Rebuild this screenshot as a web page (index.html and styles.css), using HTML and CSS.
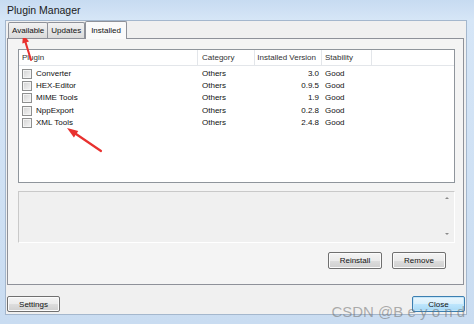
FILE: index.html
```html
<!DOCTYPE html>
<html lang="en">
<head>
  <meta charset="UTF-8" />
  <title>Plugin Manager</title>
  <link rel="stylesheet" href="styles.css">
</head>
<body>

  <div class="janela">
    <div class="titulo">Plugin Manager</div>

    <div class="cliente">
      <div class="abas">
        <div class="aba">Available</div>
        <div class="aba">Updates</div>
        <div class="aba ativa">Installed</div>
      </div>

      <div class="painel">
        <div class="lista">
          <div class="linha cabecalho">
            <div class="col-nome">Plugin</div>
            <div class="col-cat">Category</div>
            <div class="col-ver">Installed Version</div>
            <div class="col-est">Stability</div>
            <div class="col-resto"></div>
          </div>
          <div class="linha"><div class="col-nome"><span class="check"></span>Converter</div><div class="col-cat">Others</div><div class="col-ver">3.0</div><div class="col-est">Good</div></div>
          <div class="linha"><div class="col-nome"><span class="check"></span>HEX-Editor</div><div class="col-cat">Others</div><div class="col-ver">0.9.5</div><div class="col-est">Good</div></div>
          <div class="linha"><div class="col-nome"><span class="check"></span>MIME Tools</div><div class="col-cat">Others</div><div class="col-ver">1.9</div><div class="col-est">Good</div></div>
          <div class="linha"><div class="col-nome"><span class="check"></span>NppExport</div><div class="col-cat">Others</div><div class="col-ver">0.2.8</div><div class="col-est">Good</div></div>
          <div class="linha"><div class="col-nome"><span class="check"></span>XML Tools</div><div class="col-cat">Others</div><div class="col-ver">2.4.8</div><div class="col-est">Good</div></div>
        </div>

        <div class="descricao">
          <div class="rolagem">
            <span class="seta-cima"></span>
            <span class="seta-baixo"></span>
          </div>
        </div>

        <div class="acoes">
          <button class="botao">Reinstall</button>
          <button class="botao">Remove</button>
        </div>
      </div>

      <div class="rodape">
        <button class="botao">Settings</button>
        <button class="botao padrao">Close</button>
      </div>
    </div>

    <!-- anotacoes em vermelho por cima da janela -->
    <svg class="marcas" width="474" height="324" viewBox="0 0 474 324">
      <line x1="31" y1="60" x2="25.6" y2="42.6" stroke="#e8312f" stroke-width="2" stroke-linecap="round" />
      <polygon points="23,34 29,41.6 22.3,43.6" fill="#e8312f" />
      <line x1="101" y1="151" x2="76" y2="134" stroke="#e8312f" stroke-width="2.2" stroke-linecap="round" />
      <polygon points="67,128 78.3,130.9 73.9,137.5" fill="#e8312f" />
    </svg>

    <div class="marca-dagua">CSDN @B e y o n d</div>
  </div>

</body>
</html>
```

FILE: styles.css
```css
    body {
      margin: 0;
      font-family: "Liberation Sans", Arial, sans-serif;
      font-size: 8px;
      color: #111;
    }

    .janela {
      position: relative;
      width: 474px;
      height: 324px;
      box-sizing: border-box;
      padding: 20px 7px 9px 5px;
      background: linear-gradient(#c7dbf1, #d6e6f7 20px, #c9dcf1);
    }

    .titulo {
      position: absolute;
      top: 4px;
      left: 7px;
      font-size: 10.5px;
      color: #1a1a1a;
    }

    .cliente {
      height: 100%;
      box-sizing: border-box;
      border: 1px solid #a4b7cd;
      background-color: #f0f0f0;
      display: flex;
      flex-direction: column;
    }

    .abas {
      display: flex;
      align-items: flex-end;
      height: 18px;
      padding-left: 2px;
      position: relative;
      z-index: 1;
    }

    .aba {
      height: 15px;
      line-height: 15px;
      padding: 0 3px;
      margin-bottom: 1px;
      margin-right: -1px;
      border: 1px solid #8e9199;
      border-bottom: none;
      border-radius: 2px 2px 0 0;
      background: linear-gradient(#f2f2f2, #e6e6e6 50%, #dadada);
    }

    .aba.ativa {
      height: 17px;
      line-height: 17px;
      margin-bottom: 0;
      margin-left: 1px;
      padding: 0 5px;
      background: #fafafa;
    }

    .painel {
      margin: -1px 2px 0 1px;
      height: 247px;
      box-sizing: border-box;
      border: 1px solid #8e9199;
      background-color: #f4f4f4;
      padding: 10px 8px 0 10px;
    }

    .lista {
      height: 134px;
      box-sizing: border-box;
      border: 1px solid #8f959c;
      background-color: #fff;
    }

    .linha {
      display: grid;
      grid-template-columns: 179px 57px 67px 50px 1fr;
      height: 12.2px;
      line-height: 12px;
    }

    .linha:nth-child(2) {
      margin-top: 2px;
    }

    .linha > div {
      white-space: nowrap;
      overflow: hidden;
    }

    .cabecalho {
      height: 15px;
      line-height: 15px;
      border-bottom: 1px solid #e3e6ea;
      color: #333;
    }

    .cabecalho > div {
      border-right: 1px solid #e3e6ea;
    }

    .cabecalho > .col-resto {
      border-right: none;
    }

    .col-nome {
      padding-left: 3px;
      display: flex;
      align-items: center;
    }

    .col-cat {
      padding-left: 4px;
    }

    .col-ver {
      text-align: right;
      padding-right: 3px;
    }

    .cabecalho .col-ver {
      padding-right: 5px;
    }

    .col-est {
      padding-left: 3px;
    }

    .check {
      display: inline-block;
      width: 8px;
      height: 8px;
      margin-right: 4px;
      border: 1px solid #8e8f8f;
      background: linear-gradient(135deg, #d2d2d2, #f6f6f6);
      box-shadow: inset 0 0 0 1px #f4f4f4;
    }

    .descricao {
      margin-top: 8px;
      height: 52px;
      box-sizing: border-box;
      border: 1px solid;
      border-color: #c9c9c9 #ffffff #ffffff #c9c9c9;
      background-color: #f0f0f0;
      display: flex;
      justify-content: flex-end;
    }

    .rolagem {
      width: 14px;
      display: flex;
      flex-direction: column;
      justify-content: space-between;
      align-items: center;
      padding: 5px 0 7px;
    }

    .seta-cima, .seta-baixo {
      width: 0;
      height: 0;
      border-left: 2px solid transparent;
      border-right: 2px solid transparent;
    }

    .seta-cima {
      border-bottom: 2px solid #8a8a8a;
    }

    .seta-baixo {
      border-top: 2px solid #8a8a8a;
    }

    .acoes {
      display: flex;
      justify-content: flex-end;
      gap: 10px;
      margin-top: 9px;
      padding-right: 9px;
    }

    .botao {
      font-family: "Liberation Sans", Arial, sans-serif;
      font-size: 8px;
      color: #111;
      width: 54px;
      height: 17px;
      padding: 0;
      border: 1px solid #707070;
      border-radius: 2px;
      background: linear-gradient(#f4f4f4, #ebebeb 50%, #dddddd 51%, #cfcfcf);
      box-shadow: inset 0 0 0 1px #fbfbfb;
    }

    .rodape {
      display: flex;
      justify-content: space-between;
      padding: 11px 1px 0 1px;
    }

    .rodape .botao {
      width: 53px;
      height: 16px;
    }

    .botao.padrao {
      border-color: #3c7fb1;
      background: linear-gradient(#eaf6fd, #d9f0fc 50%, #bee6fd 51%, #a7d9f5);
      box-shadow: inset 0 0 0 1px #c6e6f8;
    }

    .marcas {
      position: absolute;
      top: 0;
      left: 0;
      pointer-events: none;
    }

    .marca-dagua {
      position: absolute;
      right: 9px;
      bottom: 4px;
      font-size: 15px;
      color: rgba(110, 110, 110, 0.55);
      pointer-events: none;
    }
```
